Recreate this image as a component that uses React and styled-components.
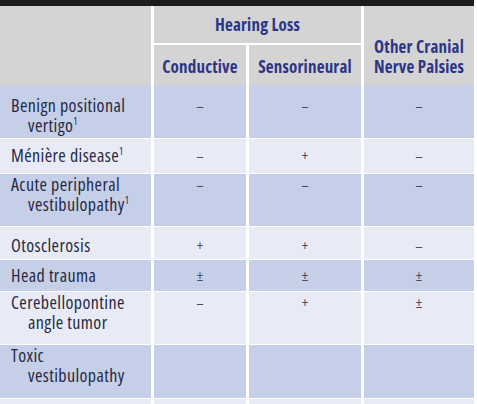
import React from 'react';
import styled, { createGlobalStyle } from 'styled-components';

const Global = createGlobalStyle`
  html, body { margin: 0; padding: 0; background: #fff; overflow: hidden; }
  * { box-sizing: border-box; }
`;

const tones = {
  blue: '#c5cfe7',
  light: '#e8ebf6',
};

const rows = [
  { label: ['Benign positional', 'vertigo'], note: true, pt: 10, h: 54, tone: 'blue', vals: ['–', '–', '–'] },
  { label: ['Ménière disease'], note: true, pt: 6, h: 35, tone: 'light', vals: ['–', '+', '–'] },
  { label: ['Acute peripheral', 'vestibulopathy'], note: true, pt: 0, h: 53, tone: 'blue', vals: ['–', '–', '–'] },
  { label: ['Otosclerosis'], pt: 8, h: 33, tone: 'light', vals: ['+', '+', '–'] },
  { label: ['Head trauma'], pt: 5, h: 32, tone: 'blue', vals: ['±', '±', '±'] },
  { label: ['Cerebellopontine', 'angle tumor'], pt: 0, h: 53, tone: 'light', vals: ['–', '+', '±'] },
  { label: ['Toxic', 'vestibulopathy'], pt: 0, h: 54, tone: 'blue', vals: ['', '', ''] },
  { label: [], pt: 0, h: 20, tone: 'light', vals: ['', '', ''] },
];

const Table = styled.div`
  display: grid;
  width: 474px;
  grid-template-columns: 151px 92px 112px 110px;
  grid-template-rows: ${(p) => p.$rows};
  column-gap: 3px;
  border-top: 6px solid #1c1c1e;
  background: #fff;
  font-family: "Open Sans", "DejaVu Sans", sans-serif;
  font-stretch: 75%;
`;

const HeadCell = styled.div`
  grid-column: ${(p) => p.$col};
  grid-row: ${(p) => p.$row};
  display: flex;
  flex-direction: column;
  align-items: center;
  justify-content: ${(p) => (p.$bottom ? 'flex-end' : 'center')};
  padding-bottom: ${(p) => (p.$bottom ? '8px' : '0')};
  border-bottom: ${(p) => (p.$rule ? '2px solid #fff' : 'none')};
  background: #d4d4d5;
  color: #2c3586;
  font-size: 17px;
  font-weight: 700;
  letter-spacing: 0.2px;
  line-height: 20px;
  text-align: center;
`;

const Cell = styled.div`
  background: ${(p) => tones[p.$tone]};
  border-bottom: 1px solid #fff;
  padding-top: ${(p) => p.$pt}px;
  line-height: 20px;
`;

const Label = styled(Cell)`
  padding-left: 28px;
  text-indent: -17px;
  font-size: 18px;
  letter-spacing: 0.4px;
  color: #272a44;
`;

const Value = styled(Cell)`
  text-align: center;
  font-size: 15px;
  color: #4a4c5e;
`;

const Note = styled.sup`
  font-size: 10px;
  line-height: 0;
  letter-spacing: 0;
  vertical-align: 7px;
`;

export default function App() {
  const template = ['39px', '40px', ...rows.map((r) => `${r.h}px`)].join(' ');
  return (
    <>
      <Global />
      <Table $rows={template}>
        <HeadCell $col="1" $row="1 / 3" />
        <HeadCell $col="2 / 4" $row="1" $rule>Hearing Loss</HeadCell>
        <HeadCell $col="4" $row="1 / 3" $bottom>
          <span>Other Cranial</span>
          <span>Nerve Palsies</span>
        </HeadCell>
        <HeadCell $col="2" $row="2" $bottom>Conductive</HeadCell>
        <HeadCell $col="3" $row="2" $bottom>Sensorineural</HeadCell>

        {rows.map((r, i) => (
          <React.Fragment key={i}>
            <Label $tone={r.tone} $pt={r.pt}>
              {r.label.map((line, j) => (
                <React.Fragment key={j}>
                  {j > 0 && <br />}
                  {line}
                  {r.note && j === r.label.length - 1 && <Note>1</Note>}
                </React.Fragment>
              ))}
            </Label>
            {r.vals.map((v, j) => (
              <Value key={j} $tone={r.tone} $pt={r.pt}>
                {v}
              </Value>
            ))}
          </React.Fragment>
        ))}
      </Table>
    </>
  );
}
